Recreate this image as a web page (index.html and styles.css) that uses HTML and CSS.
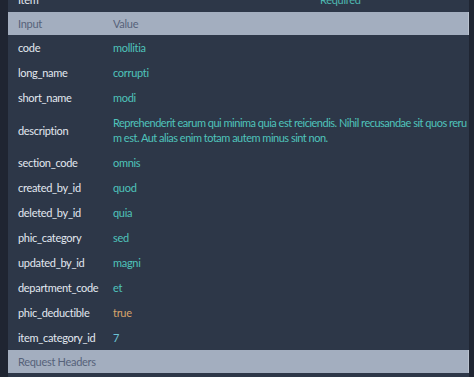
FILE: index.html
```html
<!DOCTYPE html>
<html lang="en">

<head>
  <meta charset="utf-8">
  <title>Request</title>
  <link rel="stylesheet" href="styles.css">
</head>

<body>
  <div class="panel">
    <div class="prev-row">
      <span class="prev-name">Item</span>
      <span class="prev-flag">Required</span>
    </div>
    <div class="section-head">
      <span class="col-key">Input</span>
      <span>Value</span>
    </div>
    <table class="params">
      <tr><td class="key">code</td><td class="val">mollitia</td></tr>
      <tr><td class="key">long_name</td><td class="val">corrupti</td></tr>
      <tr><td class="key">short_name</td><td class="val">modi</td></tr>
      <tr><td class="key">description</td><td class="val val-desc">Reprehenderit earum qui minima quia est reiciendis. Nihil recusandae sit quos rerum est. Aut alias enim totam autem minus sint non.</td></tr>
      <tr><td class="key">section_code</td><td class="val">omnis</td></tr>
      <tr><td class="key">created_by_id</td><td class="val">quod</td></tr>
      <tr><td class="key">deleted_by_id</td><td class="val">quia</td></tr>
      <tr><td class="key">phic_category</td><td class="val">sed</td></tr>
      <tr><td class="key">updated_by_id</td><td class="val">magni</td></tr>
      <tr><td class="key">department_code</td><td class="val">et</td></tr>
      <tr><td class="key">phic_deductible</td><td class="val val-bool">true</td></tr>
      <tr><td class="key">item_category_id</td><td class="val val-num">7</td></tr>
    </table>
    <div class="section-head">
      <span>Request Headers</span>
    </div>
  </div>
</body>

</html>
```

FILE: styles.css
```css
html,
body {
  margin: 0;
  padding: 0;
  background-color: #1f2532;
  height: 100%;
  overflow: hidden;
}

body {
  padding: 0 5px 0 8px;
  font-family: Lato, "Open Sans", Arial, sans-serif;
  font-size: 11px;
  letter-spacing: -0.3px;
  line-height: 15px;
  color: #e2e8f0;
}

.panel {
  background-color: #2d3748;
  margin-top: -13px;
  min-height: 420px;
}

.prev-row {
  display: flex;
  padding: 5px 10px;
}

.prev-name {
  width: 302px;
}

.prev-flag {
  color: #4fb8b0;
}

.section-head {
  display: flex;
  background-color: #a3aebf;
  color: #56627a;
  padding: 4px 10px;
  height: 15px;
  border-right: 1px solid #b9c2cf;
}

.section-head .col-key {
  width: 95px;
}

.params {
  border-collapse: collapse;
  width: 100%;
}

.params td {
  padding: 5px 0;
  vertical-align: middle;
}

.params .key {
  width: 95px;
  padding-left: 10px;
  white-space: nowrap;
}

.params .val {
  color: #4fc3bb;
  padding-right: 2px;
  word-break: break-all;
}

.params .val-desc {
  letter-spacing: -0.5px;
}

.params .val-bool {
  color: #d9a46b;
}

.params .val-num {
  color: #6cc3d5;
}
```
